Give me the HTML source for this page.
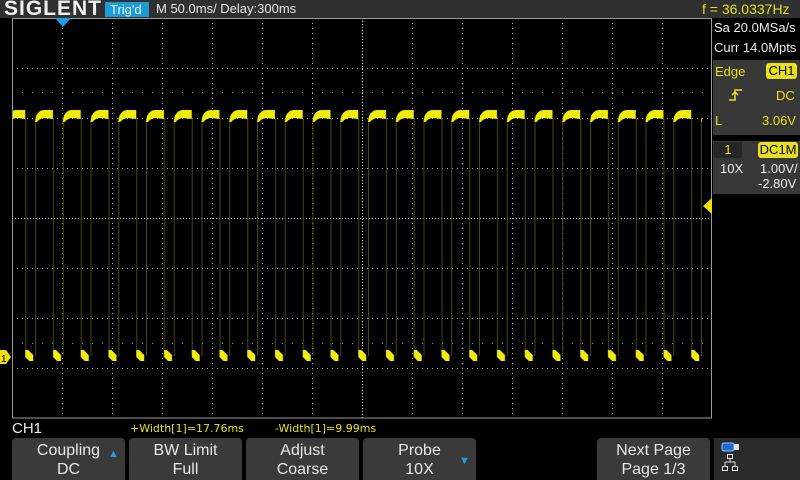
<!DOCTYPE html>
<html><head><style>
body{margin:0;width:800px;height:480px;background:#000;overflow:hidden;position:relative;font-family:"Liberation Sans",sans-serif;color:#fff}
.a{position:absolute}
.btn{position:absolute;top:438px;height:42px;background:#3a3a3a;border-radius:4px 4px 0 0;color:#e8e8e8;font-size:16px;text-align:center;line-height:19px;padding-top:3px;box-sizing:border-box}
.y{color:#e8e020}
</style></head><body>
<div class="a" style="left:0;top:0;width:800px;height:18px;background:#303030"></div>
<div class="a" style="left:4px;top:-3px;font-size:21px;font-weight:bold;color:#f0f0f0;letter-spacing:1px">SIGLENT</div>
<div class="a" style="left:105px;top:2px;width:44px;height:15px;background:#1e9ad6;font-size:13px;line-height:15px;color:#dfe;padding-left:5px;box-sizing:border-box">Trig'd</div>
<div class="a" style="left:156px;top:1px;font-size:13px;color:#e8e8e8">M 50.0ms/ Delay:300ms</div>
<div class="a y" style="left:702px;top:1px;font-size:14px">f = 36.0337Hz</div>
<svg class="a" style="left:0;top:0" width="800" height="480">
<defs>
<pattern id="sig" x="7.25" y="0" width="27.75" height="480" patternUnits="userSpaceOnUse">
<line x1="0.5" y1="118" x2="0.5" y2="356" stroke="#4a470c" stroke-width="1"/>
<line x1="18.5" y1="118" x2="18.5" y2="352" stroke="#4a470c" stroke-width="1"/>
<path d="M0 122 L1 116 Q4 110 9 110 L18 110 L18 119 L9 118 Q4 119 2 122 Z" fill="#f0ec10"/>
<path d="M18 350 L21 350 L26 355 L26 361 L22 361 L18 357 Z" fill="#f0ec10"/>
</pattern>
</defs>
<g stroke="#b8b8b8" stroke-width="1" stroke-dasharray="1 4">
<line x1="62.5" y1="18" x2="62.5" y2="418"/><line x1="112.5" y1="18" x2="112.5" y2="418"/><line x1="162.5" y1="18" x2="162.5" y2="418"/><line x1="212.5" y1="18" x2="212.5" y2="418"/><line x1="262.5" y1="18" x2="262.5" y2="418"/><line x1="312.5" y1="18" x2="312.5" y2="418"/><line x1="412.5" y1="18" x2="412.5" y2="418"/><line x1="462.5" y1="18" x2="462.5" y2="418"/><line x1="512.5" y1="18" x2="512.5" y2="418"/><line x1="562.5" y1="18" x2="562.5" y2="418"/><line x1="612.5" y1="18" x2="612.5" y2="418"/><line x1="662.5" y1="18" x2="662.5" y2="418"/>
<line x1="12" y1="68.5" x2="712" y2="68.5"/><line x1="12" y1="118.5" x2="712" y2="118.5"/><line x1="12" y1="168.5" x2="712" y2="168.5"/><line x1="12" y1="268.5" x2="712" y2="268.5"/><line x1="12" y1="318.5" x2="712" y2="318.5"/><line x1="12" y1="368.5" x2="712" y2="368.5"/>
</g>
<g stroke="#ddd" stroke-width="1" stroke-dasharray="1 2">
<line x1="362.5" y1="18" x2="362.5" y2="418"/><line x1="12" y1="218.5" x2="712" y2="218.5"/>
</g>
<g stroke="#999" stroke-dasharray="1 9"><line x1="22" y1="92.5" x2="712" y2="92.5"/><line x1="22" y1="343.5" x2="712" y2="343.5"/></g>
<rect x="12" y="104" width="690" height="270" fill="url(#sig)"/>
<rect x="12" y="104" width="1" height="270" fill="#000"/>
<rect x="12.5" y="18.5" width="699" height="399.5" fill="none" stroke="#999"/>
<path d="M55 18 L71 18 L63 27 Z" fill="#1ea0e0"/>
<path d="M712 198 L712 214 L703 206 Z" fill="#f0e010"/>
<path d="M0 350 L6 350 L11 357 L6 364 L0 364 Z" fill="#f0e010"/>
<text x="1" y="362" font-size="10" font-family="Liberation Sans" fill="#000">1</text>
</svg>
<div class="a" style="left:714px;top:20px;font-size:13px;color:#eee">Sa 20.0MSa/s</div>
<div class="a" style="left:714px;top:40px;font-size:13px;color:#eee">Curr 14.0Mpts</div>
<div class="a" style="left:713px;top:60px;width:87px;height:75px;background:#383838"></div>
<div class="a y" style="left:715px;top:64px;font-size:13px">Edge</div>
<div class="a" style="left:766px;top:63px;width:31px;height:16px;background:#e8e020;border-radius:3px;color:#000;font-size:13px;text-align:center;line-height:16px">CH1</div>
<svg class="a" style="left:728px;top:88px" width="16" height="14"><path d="M1 12 H7 V2 H14 M4 7 L7 4 L10 7" stroke="#e8e020" stroke-width="1.5" fill="none"/></svg>
<div class="a y" style="left:776px;top:88px;font-size:13px">DC</div>
<div class="a y" style="left:715px;top:113px;font-size:13px">L</div>
<div class="a y" style="left:762px;top:113px;font-size:13px">3.06V</div>
<div class="a" style="left:713px;top:141px;width:87px;height:53px;background:#383838"></div>
<div class="a" style="left:714px;top:142px;width:28px;height:16px;background:#262626;color:#e8e020;font-size:13px;text-align:center">1</div>
<div class="a" style="left:758px;top:142px;width:40px;height:16px;background:#e8e020;border-radius:3px;color:#000;font-size:13px;text-align:center;line-height:16px">DC1M</div>
<div class="a" style="left:720px;top:161px;font-size:13px;color:#eee">10X</div>
<div class="a" style="left:760px;top:161px;font-size:13px;color:#eee">1.00V/</div>
<div class="a" style="left:758px;top:176px;font-size:13px;color:#eee">-2.80V</div>
<div class="a" style="left:12px;top:420px;font-size:15px;color:#eee">CH1</div>
<div class="a y" style="left:130px;top:422px;font-size:11px;font-family:'DejaVu Sans',sans-serif">+Width[1]=17.76ms</div>
<div class="a y" style="left:275px;top:422px;font-size:11px;font-family:'DejaVu Sans',sans-serif">-Width[1]=9.99ms</div>
<div class="btn" style="left:12px;width:113px">Coupling<br>DC</div>
<div class="a" style="left:108px;top:448px;color:#1ea0e0;font-size:11px">▲</div>
<div class="btn" style="left:129px;width:113px">BW Limit<br>Full</div>
<div class="btn" style="left:246px;width:113px">Adjust<br>Coarse</div>
<div class="btn" style="left:363px;width:113px">Probe<br>10X</div>
<div class="a" style="left:459px;top:455px;color:#1ea0e0;font-size:11px">▼</div>
<div class="btn" style="left:597px;width:113px">Next Page<br>Page 1/3</div>
<div class="a" style="left:714px;top:438px;width:86px;height:42px;background:#2a2a2a"></div>
<svg class="a" style="left:720px;top:440px" width="30" height="40">
<rect x="2" y="3" width="12" height="8" rx="2" fill="#1e6ad0" stroke="#8cf"/><rect x="14" y="4" width="5" height="6" fill="#ddd"/>
<g stroke="#ddd" fill="none"><path d="M10 18 V22 M5 22 H15 M5 22 V26 M15 22 V26"/><rect x="7.5" y="14.5" width="5" height="4"/><rect x="2.5" y="26.5" width="5" height="4"/><rect x="12.5" y="26.5" width="5" height="4"/></g>
</svg>
</body></html>
